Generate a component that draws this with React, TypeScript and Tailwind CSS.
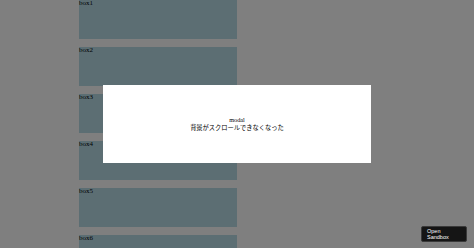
const boxes = ['box1', 'box2', 'box3', 'box4', 'box5', 'box6'];

export default function App() {
  return (
    <div className="min-h-screen bg-white font-['Liberation_Serif',serif] text-black">
      <div className="ml-[79px] w-[158px]">
        {boxes.map((b) => (
          <div key={b} className="mb-[8px] h-[39px] bg-[#b8dde7] text-[7px] leading-[6px]">
            {b}
          </div>
        ))}
      </div>

      <div className="fixed inset-0 flex items-center justify-center bg-black/50">
        <div className="flex h-[78px] w-[268px] flex-col items-center justify-center bg-white text-center text-[6.25px] leading-[8px]">
          <p>modal</p>
          <p className="font-['Liberation_Sans','Noto_Sans_CJK_JP',sans-serif]">背景がスクロールできなくなった</p>
        </div>
      </div>

      <button className="fixed bottom-[6px] right-[7px] w-[46px] rounded-[2px] border border-[#3a3a3a] bg-[#151515] px-[5px] py-[1px] text-left font-['Liberation_Sans',sans-serif] text-[5.5px] leading-[6px] text-white">
        Open
        <br />
        Sandbox
      </button>
    </div>
  );
}
